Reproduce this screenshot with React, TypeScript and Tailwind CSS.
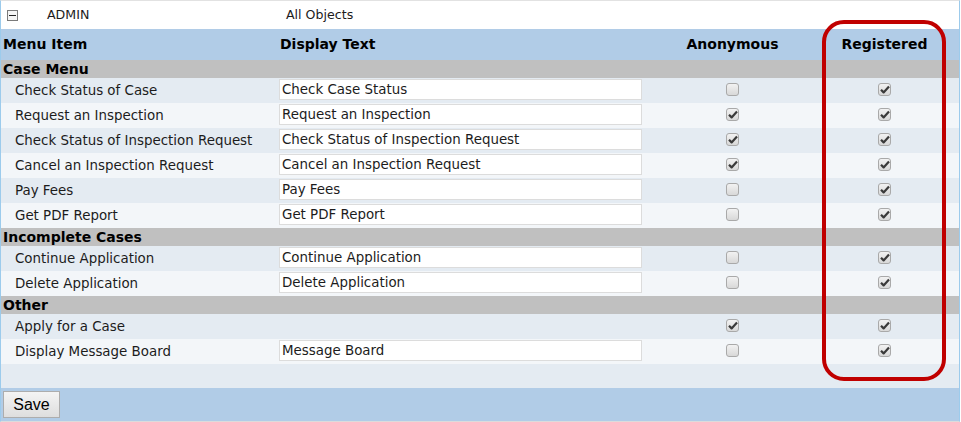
import React from "react";

type Row = { label: string; text?: string; anon: boolean; reg: boolean };
type Group = { title: string; rows: Row[] };

const groups: Group[] = [
  {
    title: "Case Menu",
    rows: [
      { label: "Check Status of Case", text: "Check Case Status", anon: false, reg: true },
      { label: "Request an Inspection", text: "Request an Inspection", anon: true, reg: true },
      { label: "Check Status of Inspection Request", text: "Check Status of Inspection Request", anon: true, reg: true },
      { label: "Cancel an Inspection Request", text: "Cancel an Inspection Request", anon: true, reg: true },
      { label: "Pay Fees", text: "Pay Fees", anon: false, reg: true },
      { label: "Get PDF Report", text: "Get PDF Report", anon: false, reg: true },
    ],
  },
  {
    title: "Incomplete Cases",
    rows: [
      { label: "Continue Application", text: "Continue Application", anon: false, reg: true },
      { label: "Delete Application", text: "Delete Application", anon: false, reg: true },
    ],
  },
  {
    title: "Other",
    rows: [
      { label: "Apply for a Case", anon: true, reg: true },
      { label: "Display Message Board", text: "Message Board", anon: false, reg: true },
    ],
  },
];

const cols = "grid grid-cols-[278px_376px_155px_149px]";

const Check = ({ on }: { on: boolean }) => (
  <span className="flex h-[13px] w-[13px] items-center justify-center rounded-[3px] border border-[#a9a9a9] bg-gradient-to-b from-[#f2f2f2] to-[#d8d8d8]">
    {on && (
      <svg width="10" height="9" viewBox="0 0 10 9">
        <path d="M1 4.8 L3.6 7.4 L9 1.5" fill="none" stroke="#3a3a3a" strokeWidth="2.2" strokeLinejoin="round" />
      </svg>
    )}
  </span>
);

export default function App() {
  return (
    <div className="relative h-[422px] w-[961px] bg-white font-['DejaVu_Sans',Verdana,sans-serif] text-[13.4px] text-[#1c1c1c]">
      <div className="flex h-full w-[960px] flex-col border-x border-t border-b border-x-[#9ccbec] border-t-[#e2e2e2] border-b-[#dcdcdc]">
        <div className="flex h-[28px] items-center bg-white pt-px">
          <span className="ml-[6px] flex h-[11px] w-[11px] items-center justify-center border border-[#7a7a7a] bg-[#f4f4f4]">
            <span className="h-px w-[7px] bg-[#222]" />
          </span>
          <span className="ml-[29px] w-[239px] text-[12.6px]">ADMIN</span>
          <span className="text-[12.6px]">All Objects</span>
        </div>

        <div className={`${cols} h-[31px] items-center bg-[#b1cce7] text-[14px] font-bold text-black`}>
          <span className="pl-[2px]">Menu Item</span>
          <span className="pl-[1px]">Display Text</span>
          <span className="text-center">Anonymous</span>
          <span className="text-center">Registered</span>
        </div>

        {groups.map((g) => (
          <React.Fragment key={g.title}>
            <div className="flex h-[18px] items-center bg-[#c0c0c0] pl-[2px] text-[14px] font-bold text-black">{g.title}</div>
            {g.rows.map((r, i) => (
              <div key={r.label} className={`${cols} h-[25px] items-center ${i % 2 === 0 ? "bg-[#e4ebf2]" : "bg-[#f3f6f9]"}`}>
                <span className="pl-[14px] pt-[2px]">{r.label}</span>
                <span className="self-start pt-px">
                  {r.text && (
                    <span className="flex h-[21px] w-[363px] items-center border border-[#dcdcdc] bg-white pl-[2px] pt-[2px]">{r.text}</span>
                  )}
                </span>
                <span className="mb-[3px] flex justify-center">
                  <Check on={r.anon} />
                </span>
                <span className="mb-[3px] flex justify-center">
                  <Check on={r.reg} />
                </span>
              </div>
            ))}
          </React.Fragment>
        ))}

        <div className="h-[24px] bg-[#e4ebf2]" />

        <div className="flex flex-1 items-center bg-[#b1cce7] pl-[2px]">
          <button className="h-[27px] w-[57px] border border-[#adadad] bg-gradient-to-b from-[#f4f4f4] to-[#dedede] font-['Liberation_Sans',Arial,sans-serif] text-[16px] text-black">
            Save
          </button>
        </div>
      </div>

      <div className="pointer-events-none absolute left-[822px] top-[20px] h-[361px] w-[124px] rounded-[22px] border-[4px] border-[#c00000]" />
    </div>
  );
}
